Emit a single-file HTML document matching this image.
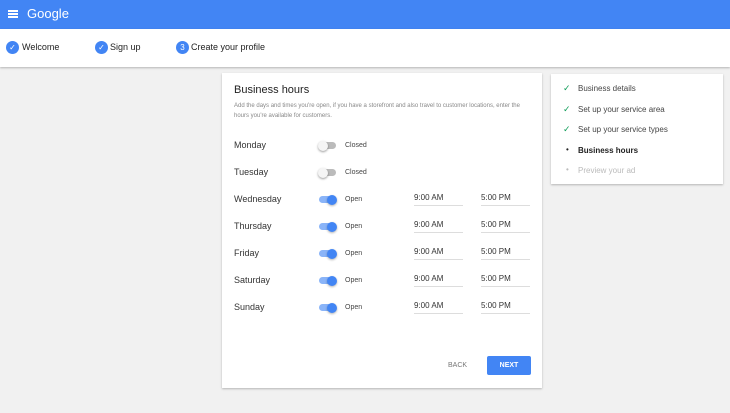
<!DOCTYPE html><html><head><style>
body{margin:0;width:730px;height:413px;background:#f1f1f1;font-family:"Liberation Sans",sans-serif;position:relative;overflow:hidden}
.a{position:absolute}
.hdr{left:0;top:0;width:730px;height:29px;background:#4285f4}
.step{left:0;top:29px;width:730px;height:38px;background:#fff;box-shadow:0 1px 2px rgba(0,0,0,.25)}
.sc{width:13px;height:13px;border-radius:50%;background:#4285f4;top:41px;color:#fff;font-size:8px;text-align:center;line-height:13px}
.st{top:42px;font-size:9px;color:#222}
.card{left:222px;top:73px;width:320px;height:315px;background:#fff;box-shadow:0 1px 2px rgba(0,0,0,.25)}
.side{left:551px;top:74px;width:172px;height:110px;background:#fff;box-shadow:0 1px 2px rgba(0,0,0,.25)}
.day{left:234px;font-size:9px;color:#333}
.tg{left:319px;width:17px;height:7px;border-radius:4px}
.kn{width:10px;height:10px;border-radius:50%;top:-1.5px}
.s{left:345px;font-size:7px;color:#444}
.t{font-size:8px;color:#333;width:49px;border-bottom:1px solid #ddd;height:12px}
.si{left:578px;font-size:8px;color:#444}
</style></head><body>
<div class="a hdr"></div>
<div class="a" style="left:8px;top:10px;width:10px;height:1.5px;background:#fff;box-shadow:0 3px 0 #fff,0 6px 0 #fff"></div>
<div class="a" style="left:27px;top:6px;font-size:13px;color:#fff">Google</div>
<div class="a step"></div>
<div class="a sc" style="left:6px">✓</div><div class="a st" style="left:22px">Welcome</div>
<div class="a sc" style="left:95px">✓</div><div class="a st" style="left:110px">Sign up</div>
<div class="a sc" style="left:176px">3</div><div class="a st" style="left:191px">Create your profile</div>
<div class="a card"></div>
<div class="a" style="left:234px;top:84px;font-size:11px;color:#222">Business hours</div>
<div class="a" style="left:234px;top:101px;width:300px;font-size:6px;line-height:10px;color:#888">Add the days and times you're open, if you have a storefront and also travel to customer locations, enter the hours you're available for customers.</div>
<div class="a day" style="top:140px">Monday</div>
<div class="a tg" style="top:142px;background:#bbb"><div class="a kn" style="left:-1px;background:#f5f5f5;box-shadow:0 1px 2px rgba(0,0,0,.4)"></div></div>
<div class="a s" style="top:142px">Closed</div>
<div class="a day" style="top:167px">Tuesday</div>
<div class="a tg" style="top:169px;background:#bbb"><div class="a kn" style="left:-1px;background:#f5f5f5;box-shadow:0 1px 2px rgba(0,0,0,.4)"></div></div>
<div class="a s" style="top:169px">Closed</div>
<div id="rows"></div>
<script>
var d=["Wednesday","Thursday","Friday","Saturday","Sunday"],h="";
d.forEach(function(n,i){var y=194+i*27;
h+='<div class="a day" style="top:'+y+'px">'+n+'</div><div class="a tg" style="top:'+(y+2)+'px;background:#8ab4f8"><div class="a kn" style="left:8px;background:#4285f4;box-shadow:0 1px 2px rgba(0,0,0,.3)"></div></div><div class="a s" style="top:'+(y+2)+'px">Open</div><div class="a t" style="left:414px;top:'+(y-1)+'px">9:00 AM</div><div class="a t" style="left:481px;top:'+(y-1)+'px">5:00 PM</div>';});
document.getElementById('rows').innerHTML=h;
</script>
<div class="a" style="left:448px;top:362px;font-size:7px;color:#777">BACK</div>
<div class="a" style="left:487px;top:356px;width:44px;height:19px;background:#4285f4;border-radius:2px;color:#fff;font-size:7px;font-weight:bold;text-align:center;line-height:19px">NEXT</div>
<div class="a side"></div>
<div class="a" style="left:563px;top:83px;color:#0f9d58;font-size:9px">✓</div><div class="a si" style="top:84px">Business details</div>
<div class="a" style="left:563px;top:104px;color:#0f9d58;font-size:9px">✓</div><div class="a si" style="top:105px">Set up your service area</div>
<div class="a" style="left:563px;top:124px;color:#0f9d58;font-size:9px">✓</div><div class="a si" style="top:125px">Set up your service types</div>
<div class="a" style="left:566px;top:145px;font-size:8px;color:#222">•</div><div class="a si" style="top:146px;font-weight:bold;color:#222">Business hours</div>
<div class="a" style="left:566px;top:165px;font-size:8px;color:#bbb">•</div><div class="a si" style="top:166px;color:#bbb">Preview your ad</div>
</body></html>
